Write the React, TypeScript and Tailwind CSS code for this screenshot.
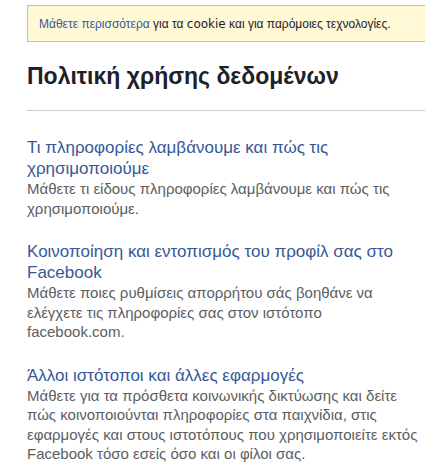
const sections = [
  {
    title: "Τι πληροφορίες λαμβάνουμε και πώς τις χρησιμοποιούμε",
    text: "Μάθετε τι είδους πληροφορίες λαμβάνουμε και πώς τις χρησιμοποιούμε.",
  },
  {
    title: "Κοινοποίηση και εντοπισμός του προφίλ σας στο Facebook",
    text: "Μάθετε ποιες ρυθμίσεις απορρήτου σάς βοηθάνε να ελέγχετε τις πληροφορίες σας στον ιστότοπο facebook.com.",
  },
  {
    title: "Άλλοι ιστότοποι και άλλες εφαρμογές",
    text: "Μάθετε για τα πρόσθετα κοινωνικής δικτύωσης και δείτε πώς κοινοποιούνται πληροφορίες στα παιχνίδια, στις εφαρμογές και στους ιστοτόπους που χρησιμοποιείτε εκτός Facebook τόσο εσείς όσο και οι φίλοι σας.",
  },
];

export default function App() {
  return (
    <div
      className="w-[425px] h-[473px] overflow-hidden bg-white"
      style={{ fontFamily: '"Liberation Sans", Arial, sans-serif' }}
    >
      <div className="pl-[27px] pt-[5px]">
        {/* cookie banner */}
        <div className="w-[420px] h-[37px] border border-[#e2c822] bg-[#fff9d7] pl-[11px] flex items-center text-[12px] text-[#1d2129]">
          <span>
            <a className="text-[#365899]">Μάθετε περισσότερα</a> για τα{" "}
            <span style={{ fontFamily: '"DejaVu Sans", sans-serif' }}>cookie</span> και για
            παρόμοιες τεχνολογίες.
          </span>
        </div>

        <h1 className="mt-[20px] text-[23px] leading-[28px] font-bold text-[#1d2129]">
          Πολιτική χρήσης δεδομένων
        </h1>
        <div className="mt-[20px] w-[420px] h-px bg-[#cccccc]" />

        <div className="w-[391px] pt-[26px] flex flex-col gap-[23px]">
          {sections.map((s) => (
            <div key={s.title}>
              <a className="block text-[17px] leading-[21px] text-[#365899]">{s.title}</a>
              <p className="text-[15px] leading-[19.5px] text-[#5b5e63]">{s.text}</p>
            </div>
          ))}
        </div>
      </div>
    </div>
  );
}
